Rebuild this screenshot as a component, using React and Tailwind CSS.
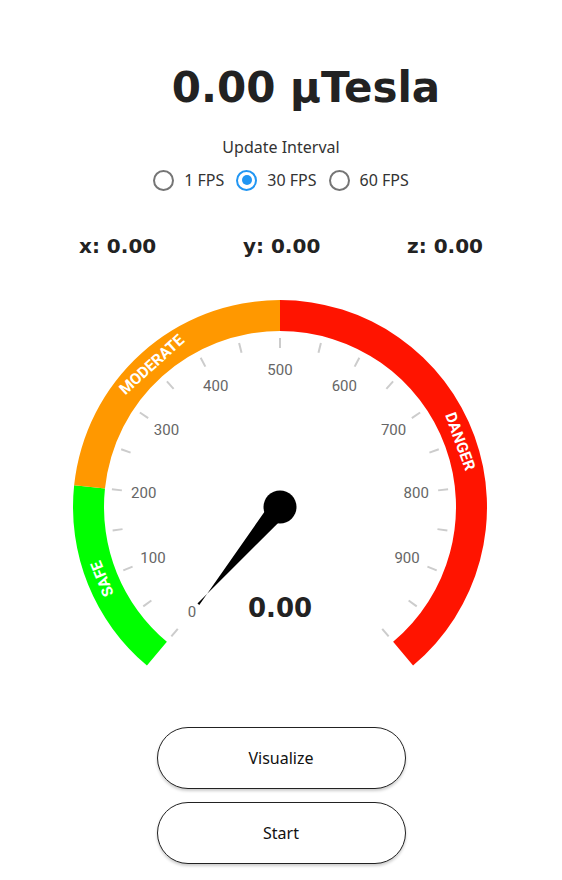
import { useState } from "react";

const CX = 208;
const CY = 207;

function pt(r, deg) {
  const a = (deg * Math.PI) / 180;
  return [CX + r * Math.sin(a), CY - r * Math.cos(a)];
}

function angleOf(v) {
  return -140 + (v / 1000) * 280;
}

function sector(r0, r1, a0, a1) {
  const [x0, y0] = pt(r1, a0);
  const [x1, y1] = pt(r1, a1);
  const [x2, y2] = pt(r0, a1);
  const [x3, y3] = pt(r0, a0);
  const big = a1 - a0 > 180 ? 1 : 0;
  return `M${x0} ${y0} A${r1} ${r1} 0 ${big} 1 ${x1} ${y1} L${x2} ${y2} A${r0} ${r0} 0 ${big} 0 ${x3} ${y3} Z`;
}

const segments = [
  { from: 0, to: 200, color: "#00FF00", label: "SAFE" },
  { from: 200, to: 500, color: "#FF9800", label: "MODERATE" },
  { from: 500, to: 1000, color: "#FF1400", label: "DANGER" },
];

function Gauge({ value }) {
  const ticks = [];
  for (let v = 0; v <= 1000; v += 50) ticks.push(v);
  const labels = [0, 100, 200, 300, 400, 500, 600, 700, 800, 900];

  const na = angleOf(value);
  const rad = (na * Math.PI) / 180;
  const [tx, ty] = pt(127, na);
  const [l1x, l1y] = pt(10, na - 90);
  const [r1x, r1y] = pt(10, na + 90);
  const t1 = [tx + 1.2 * Math.cos(rad), ty + 1.2 * Math.sin(rad)];
  const t2 = [tx - 1.2 * Math.cos(rad), ty - 1.2 * Math.sin(rad)];

  return (
    <svg width="416" height="370" viewBox="0 0 416 370" className="block">
      {segments.map((s) => (
        <path key={s.label} d={sector(176, 207, angleOf(s.from), angleOf(s.to))} fill={s.color} />
      ))}
      {segments.map((s) => {
        const a = angleOf((s.from + s.to) / 2);
        const [x, y] = pt(191.5, a);
        return (
          <text
            key={s.label}
            x={x}
            y={y}
            transform={`rotate(${a} ${x} ${y})`}
            textAnchor="middle"
            dominantBaseline="central"
            fill="#fff"
            fontSize="15.5"
            fontWeight="700"
            fontFamily="Roboto, 'Liberation Sans', sans-serif"
          >
            {s.label}
          </text>
        );
      })}
      {ticks.map((v) => {
        const a = angleOf(v);
        const [x0, y0] = pt(159, a);
        const [x1, y1] = pt(169, a);
        return <line key={v} x1={x0} y1={y0} x2={x1} y2={y1} stroke="#ccc" strokeWidth="2" />;
      })}
      {labels.map((v) => {
        const [x, y] = pt(137, angleOf(v));
        return (
          <text
            key={v}
            x={x}
            y={y}
            textAnchor="middle"
            dominantBaseline="central"
            fill="#666"
            fontSize="15"
            fontFamily="Roboto, 'Liberation Sans', sans-serif"
          >
            {v}
          </text>
        );
      })}
      <path d={`M${l1x} ${l1y} L${t1[0]} ${t1[1]} L${t2[0]} ${t2[1]} L${r1x} ${r1y} Z`} fill="#000" />
      <circle cx={CX} cy={CY} r="16.5" fill="#000" />
      <text
        x={CX}
        y="308"
        textAnchor="middle"
        dominantBaseline="central"
        fill="#222"
        fontSize="26"
        fontWeight="700"
        fontFamily="'DejaVu Sans', sans-serif"
      >
        {value.toFixed(2)}
      </text>
    </svg>
  );
}

function Radio({ label, checked, onClick }) {
  return (
    <label className="flex items-center gap-[10px] cursor-pointer" onClick={onClick}>
      <span
        className={`flex h-[21px] w-[21px] items-center justify-center rounded-full border-[2.5px] ${
          checked ? "border-[#2196f3]" : "border-[#757575]"
        }`}
      >
        {checked && <span className="h-[10px] w-[10px] rounded-full bg-[#2196f3]" />}
      </span>
      <span className="text-[16px] text-[#333]">{label}</span>
    </label>
  );
}

export default function App() {
  const [fps, setFps] = useState(30);
  const value = 0;

  return (
    <div className="flex min-h-[880px] w-full flex-col items-center bg-white font-['Noto_Sans','Open_Sans',sans-serif] text-[#222]">
      <h1 className="mt-[58px] pl-[50px] text-[42px] font-bold leading-[60px] text-[#222] font-['DejaVu_Sans',sans-serif]">
        0.00 μTesla
      </h1>

      <p className="mt-[17px] text-[16px] leading-6 text-[#333]">Update Interval</p>
      <div className="mt-[9px] flex items-center gap-[12px]">
        {[1, 30, 60].map((f) => (
          <Radio key={f} label={`${f} FPS`} checked={fps === f} onClick={() => setFps(f)} />
        ))}
      </div>

      <div className="mt-[40px] flex w-full justify-between px-[79px] text-[20px] font-bold leading-7 font-['DejaVu_Sans',sans-serif]">
        <span>x: 0.00</span>
        <span>y: 0.00</span>
        <span>z: 0.00</span>
      </div>

      <div className="mt-[40px] self-start ml-[72px]">
        <Gauge value={value} />
      </div>

      <div className="mt-[57px] flex flex-col gap-[13px]">
        <button className="h-[62px] w-[249px] rounded-full border border-[#222] bg-white text-[16px] text-[#111] shadow-[0_2px_3px_rgba(0,0,0,0.2)]">
          Visualize
        </button>
        <button className="h-[62px] w-[249px] rounded-full border border-[#222] bg-white text-[16px] text-[#111] shadow-[0_2px_3px_rgba(0,0,0,0.2)]">
          Start
        </button>
      </div>
    </div>
  );
}
